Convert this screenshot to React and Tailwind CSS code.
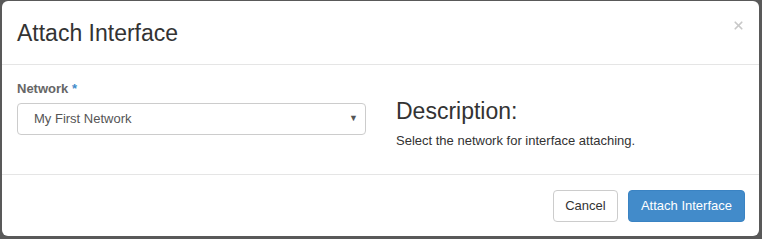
import { X } from "lucide-react";

export default function App() {
  return (
    <div className="w-[762px] h-[239px] bg-[#595959] pt-px pl-[2px] font-['Liberation_Sans',Arial,sans-serif] text-[#333]">
      <div className="w-[757px] h-[235px] bg-white rounded-[6px] flex flex-col overflow-hidden">
        {/* header */}
        <div className="h-[64px] shrink-0 border-b border-[#e5e5e5] pl-[15px] pr-[15px] flex items-center justify-between">
          <h3 className="text-[23px] leading-none text-[#333] mt-[1px]">Attach Interface</h3>
          <button className="text-[#c8c8c8] -mt-[15px] -mr-[1px]" aria-label="Close">
            <X size={13} strokeWidth={3.2} />
          </button>
        </div>

        {/* body */}
        <div className="h-[110px] shrink-0 border-b border-[#e5e5e5] px-[15px] flex">
          <div className="w-[349px] pt-[15px]">
            <label className="block text-[13px] leading-[18px] font-bold text-[#666]">
              Network <span className="text-[#428bca]">*</span>
            </label>
            <div className="mt-[5px] h-[32px] border border-[#ccc] rounded-[4px] flex items-center justify-between pl-[16px] pr-[7px] text-[13px] text-[#555]">
              <span>My First Network</span>
              <span className="text-[9px] text-[#555]">▼</span>
            </div>
          </div>
          <div className="ml-[30px] flex-1 pt-[33px]">
            <h4 className="text-[23px] leading-[26px] text-[#333]">Description:</h4>
            <p className="mt-[8px] text-[13px] leading-[18px] text-[#333]">
              Select the network for interface attaching.
            </p>
          </div>
        </div>

        {/* footer */}
        <div className="flex-1 flex items-start justify-end gap-[10px] pt-[15px] pr-[14px]">
          <button className="h-[32px] w-[65px] bg-white border border-[#ccc] rounded-[4px] text-[13px] text-[#333]">
            Cancel
          </button>
          <button className="h-[32px] px-[12px] bg-[#428bca] border border-[#3a83c3] rounded-[4px] text-[13px] text-white">
            Attach Interface
          </button>
        </div>
      </div>
    </div>
  );
}
